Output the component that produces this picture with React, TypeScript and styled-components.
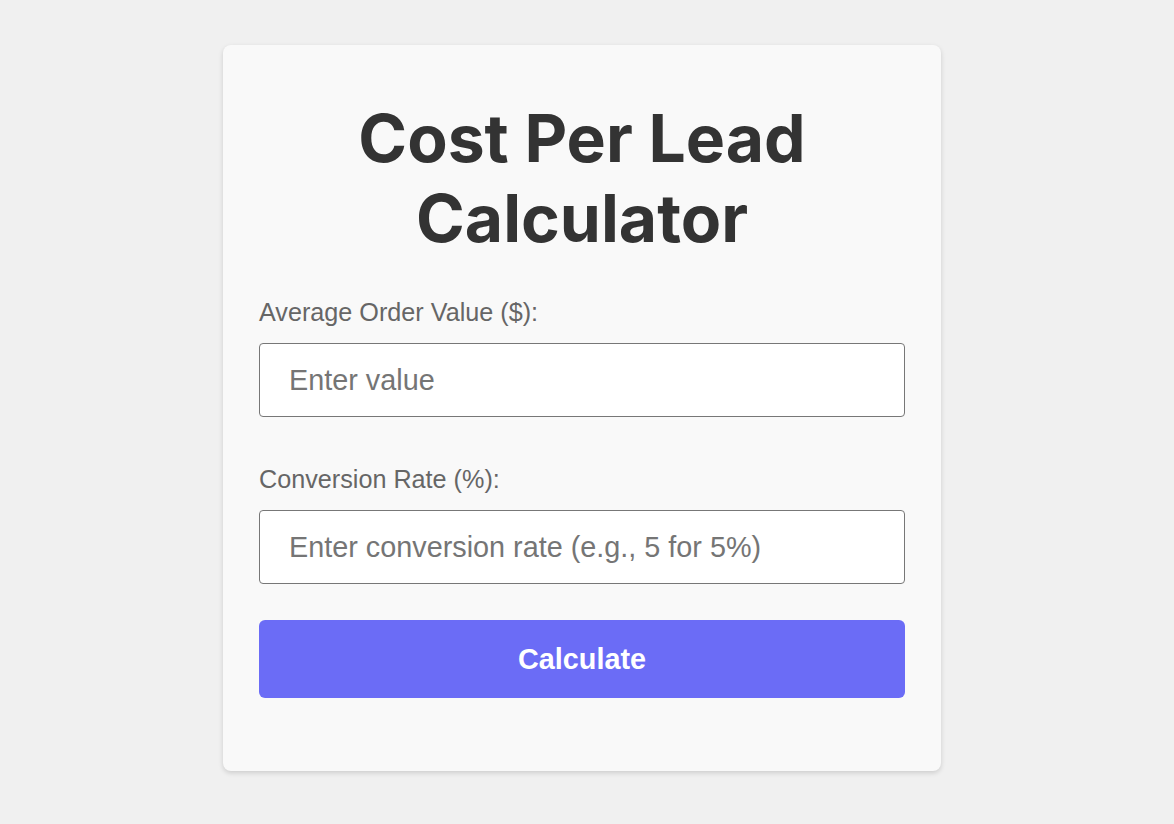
import styled, { createGlobalStyle } from 'styled-components';

const GlobalStyle = createGlobalStyle`
  body {
    margin: 0;
    background-color: #f0f0f0;
    font-family: "Liberation Sans", Arial, sans-serif;
  }
`;

const Page = styled.div`
  display: flex;
  justify-content: center;
  padding: 45px 10px 0 0;
  min-height: 824px;
  box-sizing: border-box;
`;

const Card = styled.div`
  width: 718px;
  box-sizing: border-box;
  background-color: #f9f9f9;
  border-radius: 8px;
  box-shadow: 0px 2px 5px rgba(0, 0, 0, 0.15);
  padding: 36px;
  align-self: flex-start;
`;

const Title = styled.h1`
  font-family: Inter, "Liberation Sans", sans-serif;
  font-weight: 700;
  font-size: 66px;
  line-height: 80px;
  color: #333;
  text-align: center;
  margin: 17px 0 40px;
`;

const Field = styled.div<{ $last?: boolean }>`
  display: flex;
  flex-direction: column;
  margin-bottom: ${(p) => (p.$last ? '36px' : '48px')};
`;

const Label = styled.label`
  font-size: 25.2px;
  line-height: 29px;
  color: #666;
  margin-bottom: 16px;
`;

const Input = styled.input`
  height: 74px;
  box-sizing: border-box;
  border: 1px solid #777;
  border-radius: 4px;
  background: #fff;
  padding: 0 29px;
  font-family: "Liberation Sans", Arial, sans-serif;
  font-size: 28.8px;
  color: #333;
  outline: none;

  &::placeholder {
    color: #757575;
  }
`;

const Button = styled.button`
  display: block;
  width: 100%;
  height: 78px;
  border: none;
  border-radius: 6px;
  background-color: #6b6cf6;
  color: #fff;
  font-family: "Liberation Sans", Arial, sans-serif;
  font-weight: 700;
  font-size: 28.8px;
  cursor: pointer;
  margin-bottom: 37px;
`;

export default function App() {
  return (
    <>
      <GlobalStyle />
      <Page>
        <Card>
          <Title>Cost Per Lead Calculator</Title>
          <Field>
            <Label htmlFor="aov">Average Order Value ($):</Label>
            <Input id="aov" type="number" placeholder="Enter value" />
          </Field>
          <Field $last>
            <Label htmlFor="cr">Conversion Rate (%):</Label>
            <Input id="cr" type="number" placeholder="Enter conversion rate (e.g., 5 for 5%)" />
          </Field>
          <Button>Calculate</Button>
        </Card>
      </Page>
    </>
  );
}
